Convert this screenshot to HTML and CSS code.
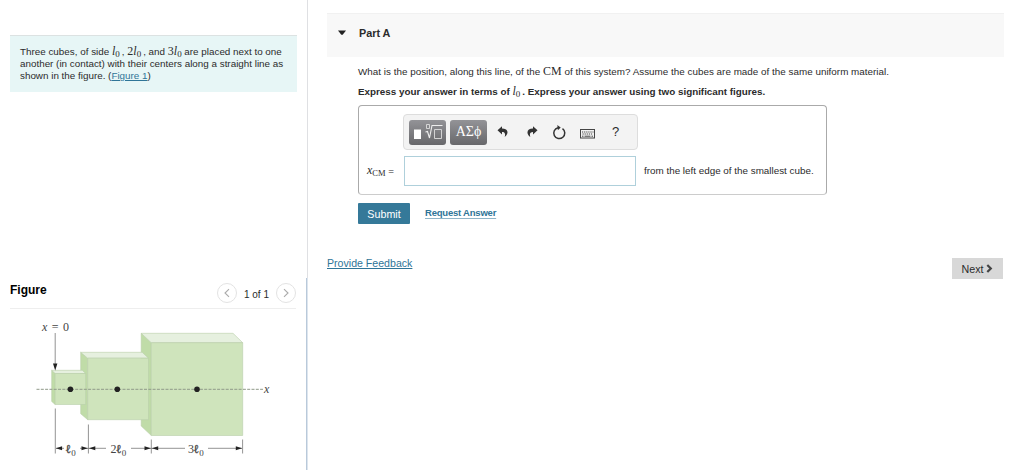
FILE: index.html
```html
<!DOCTYPE html>
<html lang="en">
<head>
<meta charset="utf-8">
<title>Part A</title>
<link rel="stylesheet" href="styles.css">
</head>
<body>
<aside class="side">
  <section class="problem">
    <div class="statement">
      <div class="s1">Three cubes, of side <span class="math"><i>l</i><sub>0</sub></span><span class="comma">,</span> <span class="math">2<i>l</i><sub>0</sub></span><span class="comma">,</span> and <span class="math">3<i>l</i><sub>0</sub></span> are placed next to one</div>
      <div class="s2">another (in contact) with their centers along a straight line as</div>
      <div class="s3">shown in the figure. (<a href="#figure">Figure 1</a>)</div>
    </div>
  </section>
  <section class="figure" id="figure">
    <header class="fighead">
      <h2>Figure</h2>
      <div class="pager">
        <button class="round" aria-label="Previous"><svg width="8" height="10" viewBox="0 0 8 10"><path d="M6 1.2 2 5l4 3.8"/></svg></button>
        <span>1 of 1</span>
        <button class="round" aria-label="Next"><svg width="8" height="10" viewBox="0 0 8 10"><path d="M2 1.2 6 5 2 8.8"/></svg></button>
      </div>
    </header>
    <svg class="diagram" width="280" height="160" viewBox="20 310 280 160">
      <g class="cube">
        <path class="edge" d="M141.2 333.3 151.3 342.7V435.5L141.2 426z"/>
        <path class="top" d="M141.2 333.3H233L242.7 342.7H151.3z"/>
        <path class="front" d="M151.3 342.7H242.7V435.5H151.3z"/>
        <path class="edge" d="M80.7 352.3 87.7 358.2V419.7L80.7 413.7z"/>
        <path class="top" d="M80.7 352.3H142.2L148.5 358.2H87.7z"/>
        <path class="front" d="M87.7 358.2H148.5V419.7H87.7z"/>
        <path class="edge" d="M51.7 370.3 55.2 373.5V404.5L51.7 401.5z"/>
        <path class="top" d="M51.7 370.3H82.3L85.7 373.5H55.2z"/>
        <path class="front" d="M55.2 373.5H85.7V404.5H55.2z"/>
      </g>
      <path class="axis" d="M36.5 389.3H263"/>
      <g class="dot"><circle cx="70.4" cy="389.2" r="2.8"/><circle cx="117.3" cy="389.2" r="2.8"/><circle cx="197" cy="389.2" r="2.8"/></g>
      <path class="rule" d="M55.2 333V367M55.3 408.5V453.5M88.4 424.5V453.5M151.3 439.5V453.5M242.6 439.5V453.5M56 448.3H64M80 448.3H106M131 448.3H185M208 448.3H242"/>
      <path class="heads" d="M55.2 370.5l-2.2-7h4.4zM55.8 448.3l6.3-2v4zM87.8 448.3l-6.3-2v4zM89 448.3l6.3-2v4zM150.8 448.3l-6.3-2v4zM151.9 448.3l6.3-2v4zM242.1 448.3l-6.3-2v4z"/>
      <text x="42" y="330.5" textLength="27"><tspan class="it">x</tspan> = 0</text>
      <text x="264" y="392.5" class="it">x</text>
      <text x="66" y="453"><tspan class="ell">ℓ</tspan><tspan class="sm" dx=".8" dy="3">0</tspan></text>
      <text x="110.5" y="453">2<tspan class="ell">ℓ</tspan><tspan class="sm" dx=".8" dy="3">0</tspan></text>
      <text x="188" y="453">3<tspan class="ell">ℓ</tspan><tspan class="sm" dx=".8" dy="3">0</tspan></text>
    </svg>
  </section>
</aside>
<main class="main">
  <header class="part">
    <svg width="8" height="6" viewBox="0 0 8 6"><path d="M0 .5h8L4.7 4.700H3.300z" fill="#222"/></svg>
    <h1>Part A</h1>
  </header>
  <div class="content">
    <p class="question">What is the position, along this line, of the <span class="math cm">CM</span> of this system? Assume the cubes are made of the same uniform material.</p>
    <p class="express">Express your answer in terms of <span class="math"><i>l</i><sub>0</sub></span><span class="comma">.</span> Express your answer using two significant figures.</p>
    <div class="answer">
      <div class="toolbar">
        <button class="key" aria-label="Templates"><svg width="37" height="25" viewBox="0 0 37 25"><path d="M5 9.500h7v9.500H5z" fill="#fff"/><path d="M16.500 12 18.500 11.500l2 6.500L23 5.500H33.500" fill="none" stroke="#eee" stroke-width="1.100"/><path d="M17.500 4.500h3v4h-3zM25.500 9.500h7v9h-7z" fill="none" stroke="#ddd" stroke-width=".9"/></svg></button>
        <button class="key greek">ΑΣϕ</button>
        <svg class="tool undo" width="13" height="12" viewBox="0 0 13 12"><path d="M5 .2 .5 4.300 5 8.400V6C8 6 8.600 8 7.700 11 12.800 7 10.500 2.500 5 2.600z"/></svg>
        <svg class="tool redo" width="13" height="12" viewBox="0 0 13 12"><path d="M7 .2 11.500 4.300 7 8.400V6C4 6 3.400 8 4.300 11-.8 7 1.500 2.500 7 2.600z"/></svg>
        <svg class="tool reset" width="14" height="15" viewBox="0 0 14 15"><path d="M10.500 3.600A5.500 5.500 0 1 1 6 2.700" fill="none" stroke="#333" stroke-width="1.500"/><path d="M5.300 .1 8.700 2.500 5.900 5.200z"/></svg>
        <svg class="tool keyboard" width="16" height="10" viewBox="0 0 16 10"><rect x=".5" y=".5" width="14" height="8.500" fill="none" stroke="#444"/><path d="M2 3h11.500M2.500 5h10.500" stroke="#444" stroke-width="1.100" stroke-dasharray="1.200 .9"/><path d="M2 7.200h1.500M4.500 7.200H10.500M11.500 7.200h1.500" stroke="#444"/></svg>
        <span class="help">?</span>
      </div>
      <div class="entry">
        <span class="label"><span class="math"><i>x</i><sub>CM</sub></span> =</span>
        <input class="field" aria-label="Answer">
        <span class="unit">from the left edge of the smallest cube.</span>
      </div>
    </div>
    <div class="actions"><button class="submit">Submit</button><a class="request" href="#">Request Answer</a></div>
  </div>
  <footer class="footer">
    <a class="feedback" href="#">Provide Feedback</a>
    <button class="next">Next <svg width="7" height="9" viewBox="0 0 7 9"><path d="M1.300 1 4.800 4.500 1.300 8" fill="none" stroke="#444" stroke-width="2.200"/></svg></button>
  </footer>
</main>
</body>
</html>
```
FILE: styles.css
```css
* { box-sizing: border-box; }
body { margin: 0; width: 1024px; height: 470px; overflow: hidden; display: flex; background: #fff; color: #2b2b2b; font: 9.85px/12px "Liberation Sans", Arial, sans-serif; }
h1, h2, p { margin: 0; }
button { font: inherit; border: 0; padding: 0; color: inherit; }
a { color: #2f7598; text-underline-offset: 1px; }
.side { width: 308px; flex: none; }
.problem { height: 278px; padding: 35px 10px 0; border-right: 1px solid #dfe0e3; }
.statement { width: 287px; height: 57px; padding: 10px 10px 0; background: #e7f6f6; border-top: 1px solid #dce2e2; white-space: nowrap; }
.math { font-family: "Liberation Serif", serif; font-size: 12px; font-weight: 400; line-height: 0; }
.math sub { font-size: 9px; line-height: 0; vertical-align: -2px; }
.comma { margin-left: 2px; }
.figure { width: 307px; height: 192px; padding: 0 10px; border-right: 1px solid #b9c9da; box-shadow: 1px 0 #dde5ee; }
.fighead { width: 286px; height: 31px; border-bottom: 1px solid #eee; display: flex; justify-content: space-between; }
h2 { font-size: 12px; line-height: 24px; color: #000; }
.pager { display: flex; align-items: center; gap: 7px; font-size: 10px; }
.pager span { padding-top: 3px; }
.round { width: 20px; height: 20px; border: 1px solid #e3e3e3; border-radius: 50%; background: #fff; display: grid; place-items: center; }
.round path { fill: none; stroke: #aaa; stroke-width: 1.1; }
.diagram { display: block; margin: 1px 0 0 10px; font: 12px "Liberation Serif", serif; fill: #444; }
.cube path { stroke: #b9cfa9; stroke-width: .6; }
.cube .front { fill: #cfe4bc; }
.cube .edge { fill: #c0dca8; }
.cube .top { fill: #e6f0df; }
.axis { stroke: #8f9989; stroke-width: 1; stroke-dasharray: 3 1.3; }
.dot, .heads { fill: #222; }
.rule { stroke: #777; stroke-width: .8; }
.it { font-style: italic; }
.ell { font-weight: 700; stroke: #444; stroke-width: .3; }
.sm { font-size: 9px; }
.main { width: 716px; padding: 13px 20px 0 19px; }
.part { height: 44px; padding: 0 0 6px 11px; background: #f8f8f8; border-top: 1px solid #f1f1f1; display: flex; align-items: center; gap: 13px; }
h1 { font-size: 10.8px; line-height: 14px; }
.content { padding: 9px 0 0 31px; height: 198px; white-space: nowrap; }
.question { height: 20px; line-height: 12px; letter-spacing: .015px; }
.express { height: 19px; font-weight: 700; letter-spacing: -.01px; }
.answer { width: 469px; height: 90px; border: 1px solid #aaa; border-bottom-color: #ccc; border-radius: 4px; padding: 8px 0 0 8px; }
.toolbar { margin-left: 36px; width: 235px; height: 36px; border: 1px solid #ddd; border-radius: 4px; background: #f3f3f3; padding: 0 5px; display: flex; align-items: center; }
.key { width: 37px; height: 25px; border-radius: 3px; margin-right: 4px; background: linear-gradient(#939397, #68686b); display: grid; place-items: center; flex: none; }
.greek { color: #fff; font: 14px "Liberation Serif", serif; }
.tool { fill: #333; flex: none; }
.undo { margin-left: 6px; }
.redo { margin-left: 16px; }
.reset { margin-left: 13px; }
.keyboard { margin-left: 14px; margin-top: 3px; }
.help { font-size: 13px; margin-left: 16px; }
.entry { display: flex; align-items: center; height: 30px; margin-top: 6px; }
.label { width: 37px; white-space: nowrap; }
.label sub { font-size: 8.5px; }
.field { width: 232px; height: 30px; border: 1px solid #afd0db; padding: 0; background: #fff; }
.unit { margin-left: 8px; }
.actions { display: flex; margin-top: 8px; }
.submit { width: 52px; height: 21px; background: #357999; color: #fff; font-size: 10.7px; border-radius: 1px; }
.request { font-weight: 700; margin: 4px 0 0 15px; font-size: 9.5px; letter-spacing: -.21px; text-decoration-color: #8fb5c8; text-underline-offset: 2px; }
.footer { display: flex; justify-content: space-between; padding-right: 1px; }
.feedback { font-size: 10.6px; line-height: 14px; margin-top: 1px; }
.next { width: 51px; height: 21px; margin-top: 3px; background: #d8d8d8; font-size: 10.7px; }
```
